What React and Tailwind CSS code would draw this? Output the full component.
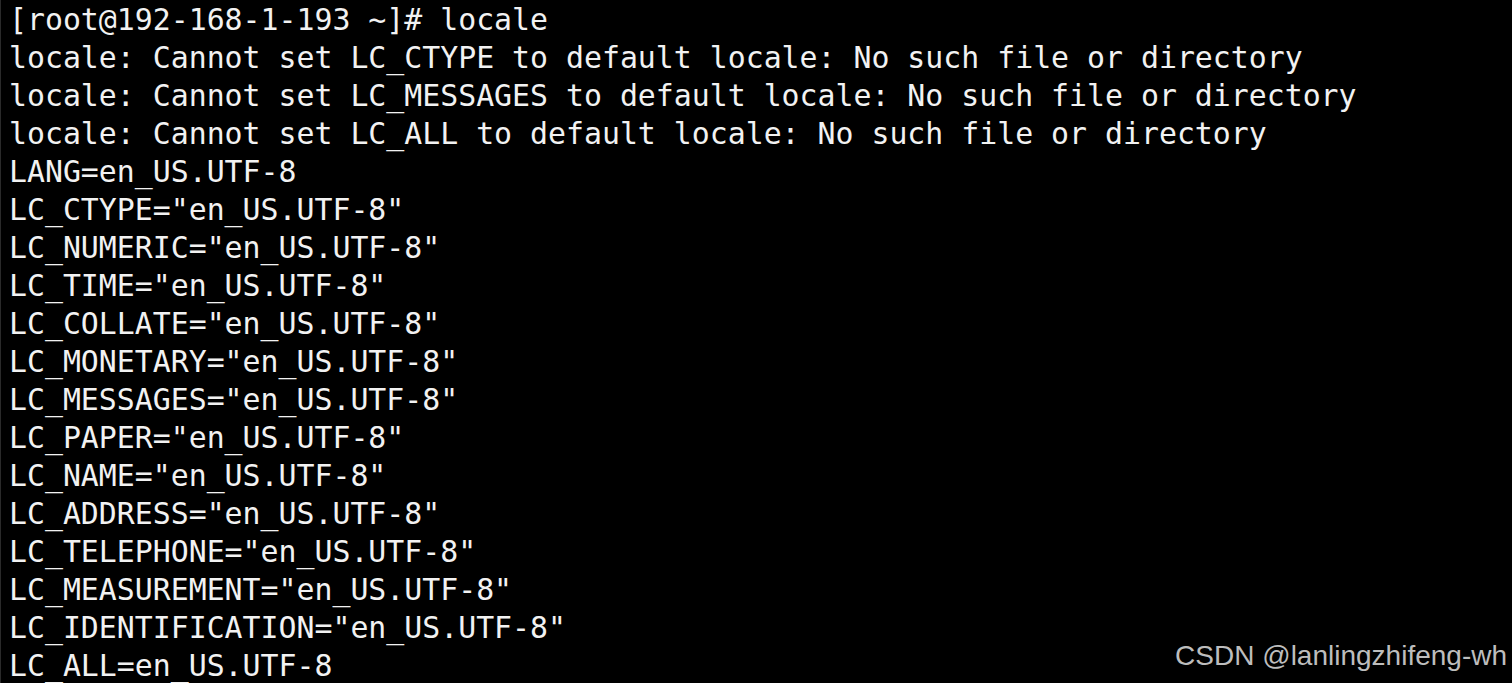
import React from 'react'

const lines = [
  '[root@192-168-1-193 ~]# locale',
  'locale: Cannot set LC_CTYPE to default locale: No such file or directory',
  'locale: Cannot set LC_MESSAGES to default locale: No such file or directory',
  'locale: Cannot set LC_ALL to default locale: No such file or directory',
  'LANG=en_US.UTF-8',
  'LC_CTYPE="en_US.UTF-8"',
  'LC_NUMERIC="en_US.UTF-8"',
  'LC_TIME="en_US.UTF-8"',
  'LC_COLLATE="en_US.UTF-8"',
  'LC_MONETARY="en_US.UTF-8"',
  'LC_MESSAGES="en_US.UTF-8"',
  'LC_PAPER="en_US.UTF-8"',
  'LC_NAME="en_US.UTF-8"',
  'LC_ADDRESS="en_US.UTF-8"',
  'LC_TELEPHONE="en_US.UTF-8"',
  'LC_MEASUREMENT="en_US.UTF-8"',
  'LC_IDENTIFICATION="en_US.UTF-8"',
  'LC_ALL=en_US.UTF-8',
]

export default function App() {
  return (
    <div className="relative w-[1512px] h-[683px] bg-black border-l border-[#2a2a2a] overflow-hidden">
      {/* terminal output */}
      <div className="pl-[8px] pt-[1px] text-[#f2f2f2] text-[29.85px] leading-[38px] font-['DejaVu_Sans_Mono',monospace] whitespace-pre">
        {lines.map((l, i) => (
          <div key={i}>{l}</div>
        ))}
      </div>
      {/* watermark */}
      <div className="absolute right-[5px] bottom-[13px] text-[#bdbdbd] text-[28px] leading-none font-['Liberation_Sans',sans-serif]">
        CSDN @lanlingzhifeng-wh
      </div>
    </div>
  )
}
